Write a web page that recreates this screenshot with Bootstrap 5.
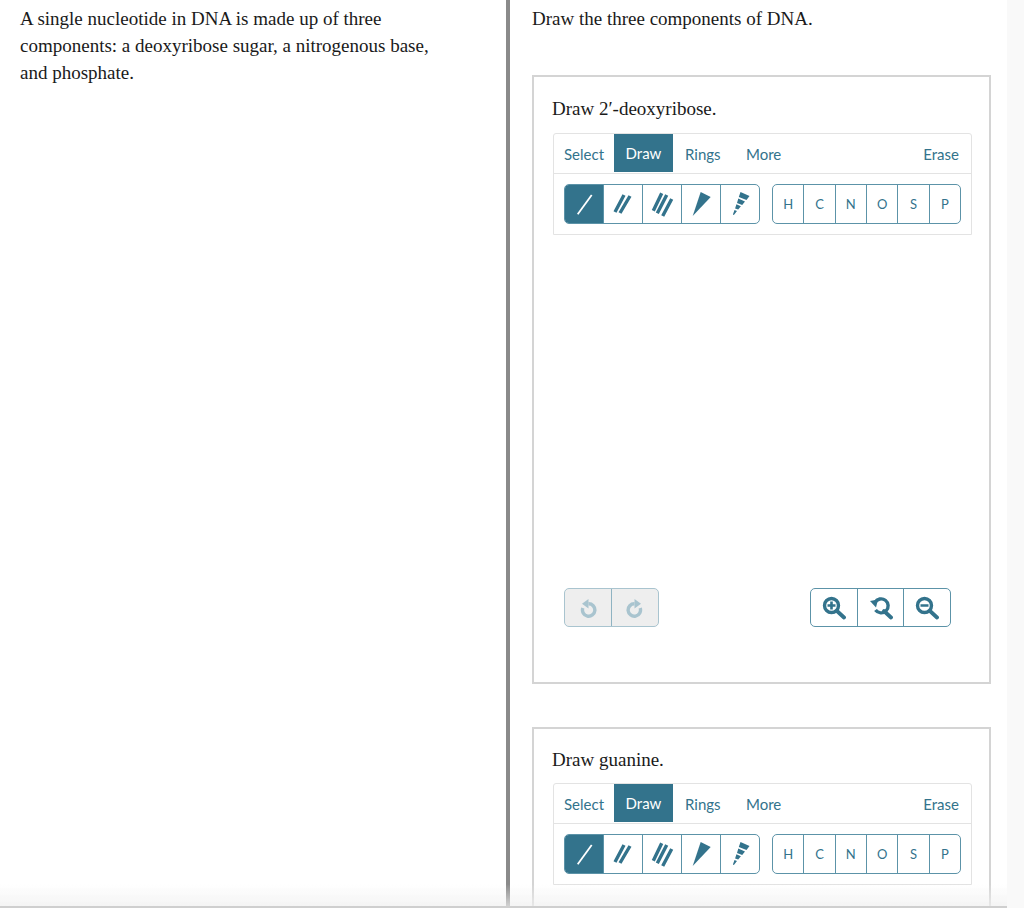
<!DOCTYPE html>
<html lang="en">
<head>
  <meta charset="UTF-8">
  <meta name="viewport" content="width=device-width, initial-scale=1">
  <title>Draw the three components of DNA</title>
  <link href="https://cdn.jsdelivr.net/npm/bootstrap@5.3.3/dist/css/bootstrap.min.css" rel="stylesheet">
  <style>
    html, body { height: 908px; overflow: hidden; }
    body {
      font-family: "Liberation Serif", serif;
      font-size: 19px;
      line-height: 27px;
      color: #1a1a1a;
      background-color: #f9f9f9;
    }
    .page-wrap { width: 1007px; height: 908px; background: #fff; overflow: hidden; }
    .left-pane { flex: 0 0 510px; padding: 5px 70px 0 20px; border-right: 4px solid #8a8a8a; }
    .right-pane { flex: 1; min-width: 0; padding: 5px 16px 0 22px; }
    .draw-box { border: 2px solid #d4d4d4; padding: 0 17px 0 19px; }
    .box-one { margin-top: 43px; height: 609px; padding-top: 18px; }
    .box-two { margin-top: 43px; padding-top: 17px; height: 180px; border-bottom: 0; }
    .draw-title { margin: 0 0 11px -1px; }
    .box-two .draw-title { margin-bottom: 10px; }
    .sketch { border: 1px solid #e3e3e3; border-radius: 3px 3px 0 0; font-family: Lato, sans-serif; font-size: 15px; color: #33738c; }
    .tab-row { height: 40px; border-bottom: 1px solid #e3e3e3; padding: 0 12px 0 9px; }
    .tab-item { line-height: 40px; }
    .tab-select { width: 41px; margin-left: 1px; }
    .tab-draw { background: #33738c; color: #fff; width: 59px; text-align: center; height: 38px; line-height: 38px; margin: 0 12px 0 9px; }
    .tab-rings { width: 37px; margin-right: 24px; }
    .tool-row { height: 60px; padding: 10px 10px 0 10px; gap: 12px; }
    .btn-strip { display: flex; height: 40px; border: 1px solid #5c93a8; border-radius: 5px; background: #fff; overflow: hidden; }
    .btn-strip > div { display: flex; align-items: center; justify-content: center; border-left: 1px solid #5c93a8; height: 100%; flex: 1; }
    .btn-strip > div:first-child { border-left: 0; }
    .strip-bonds { width: 196px; }
    .strip-atoms { width: 189px; font-size: 13px; }
    .cell-active { background: #33738c; }
    .canvas-foot { height: 392px; padding: 0 21px 0 11px; align-items: flex-end; }
    .strip-off { background: #eeeeee; border-color: #a9c4cf; width: 95px; height: 39px; }
    .strip-off > div { border-color: #8fb3c2; }
    .strip-zoom { width: 141px; height: 39px; }
    .ico-faded { color: #a9c4cf; }
    .page-fade {
      position: fixed; left: 0; right: 17px; bottom: 0; height: 24px;
      background: linear-gradient(to bottom, rgba(245,245,245,0), rgba(240,240,240,.7));
      border-bottom: 2px solid #cfcfcf;
      pointer-events: none;
    }
  </style>
</head>
<body>

<svg width="0" height="0" class="position-absolute">
  <defs>
    <symbol id="bond-double" viewBox="0 0 30 30">
      <path d="M7 23 16 6M12 24 22 7" stroke="#33738c" stroke-width="3.400" fill="none"/>
    </symbol>
    <symbol id="bond-triple" viewBox="0 0 30 30">
      <path d="M6.300 21.700 14.700 4.300M10.300 24.300 19.700 6M15.700 27 24.700 10" stroke="#33738c" stroke-width="3.400" fill="none"/>
    </symbol>
    <symbol id="bond-wedge" viewBox="0 0 30 30">
      <path d="M6.700 27 14.700 3 24.700 8Z" fill="#33738c"/>
    </symbol>
    <symbol id="bond-hash" viewBox="0 0 30 30">
      <path d="M15.500 3 24.500 7 21.500 11 13.800 8ZM13.300 9.500 20 12.500 17.200 16 12 13.900ZM11.400 15.300 15.900 17.200 13.200 20.600 10.100 19.400ZM9.500 21 12 22.100 8.900 26 7.900 25.600Z" fill="#33738c"/>
    </symbol>
    <symbol id="ico-undo" viewBox="0 0 20 20">
      <path d="M4.800 10A6.200 6.200 0 1 0 10.500 5.800" stroke="currentColor" stroke-width="3.400" fill="none"/>
      <path d="M10.500 1V10.500L4 5.700Z" fill="currentColor"/>
    </symbol>
    <symbol id="ico-redo" viewBox="0 0 20 20">
      <path d="M15.200 10A6.200 6.200 0 1 1 9.500 5.800" stroke="currentColor" stroke-width="3.400" fill="none"/>
      <path d="M9.500 1V10.500L16 5.700Z" fill="currentColor"/>
    </symbol>
    <symbol id="ico-zoom-in" viewBox="0 0 24 24">
      <circle cx="9.500" cy="9.500" r="7" stroke="#33738c" stroke-width="3.400" fill="none"/>
      <path d="M9.500 5.500v8M5.500 9.500h8" stroke="#33738c" stroke-width="2.600"/>
      <path d="M15 15 22 21.500" stroke="#33738c" stroke-width="3.800" stroke-linecap="round"/>
    </symbol>
    <symbol id="ico-zoom-reset" viewBox="0 0 24 24">
      <path d="M6 6.500A7 7 0 1 1 6.500 14" stroke="#33738c" stroke-width="3.400" fill="none"/>
      <path d="M1 5 9 3.500 7 11.500Z" fill="#33738c"/>
      <path d="M15 15 22 21.500" stroke="#33738c" stroke-width="3.800" stroke-linecap="round"/>
    </symbol>
    <symbol id="ico-zoom-out" viewBox="0 0 24 24">
      <circle cx="9.500" cy="9.500" r="7" stroke="#33738c" stroke-width="3.400" fill="none"/>
      <path d="M5.500 9.500h8" stroke="#33738c" stroke-width="2.600"/>
      <path d="M15 15 22 21.500" stroke="#33738c" stroke-width="3.800" stroke-linecap="round"/>
    </symbol>
  </defs>
</svg>

<div class="page-wrap d-flex">
  <div class="left-pane">
    <p class="mb-0">A single nucleotide in DNA is made up of three components: a deoxyribose sugar, a nitrogenous base, and phosphate.</p>
  </div>
  <div class="right-pane">
    <p class="mb-0">Draw the three components of DNA.</p>

    <div class="draw-box box-one">
      <p class="draw-title">Draw 2&#8242;-deoxyribose.</p>
      <div class="sketch">
        <div class="tab-row d-flex">
          <span class="tab-item tab-select">Select</span>
          <span class="tab-item tab-draw">Draw</span>
          <span class="tab-item tab-rings">Rings</span>
          <span class="tab-item">More</span>
          <span class="tab-item ms-auto">Erase</span>
        </div>
        <div class="tool-row d-flex">
          <div class="btn-strip strip-bonds">
            <div class="cell-active"><svg width="30" height="30" viewBox="0 0 30 30"><path d="M8.700 25.300 22.700 6" stroke="#fff" stroke-width="1.800"/></svg></div>
            <div><svg width="30" height="30"><use href="#bond-double"/></svg></div>
            <div><svg width="30" height="30"><use href="#bond-triple"/></svg></div>
            <div><svg width="30" height="30"><use href="#bond-wedge"/></svg></div>
            <div><svg width="30" height="30"><use href="#bond-hash"/></svg></div>
          </div>
          <div class="btn-strip strip-atoms">
            <div>H</div><div>C</div><div>N</div><div>O</div><div>S</div><div>P</div>
          </div>
        </div>
      </div>
      <div class="canvas-foot d-flex justify-content-between">
        <div class="btn-strip strip-off">
          <div><svg class="ico-faded" width="20" height="20"><use href="#ico-undo"/></svg></div>
          <div><svg class="ico-faded" width="20" height="20"><use href="#ico-redo"/></svg></div>
        </div>
        <div class="btn-strip strip-zoom">
          <div><svg width="24" height="24"><use href="#ico-zoom-in"/></svg></div>
          <div><svg width="24" height="24"><use href="#ico-zoom-reset"/></svg></div>
          <div><svg width="24" height="24"><use href="#ico-zoom-out"/></svg></div>
        </div>
      </div>
    </div>

    <div class="draw-box box-two">
      <p class="draw-title">Draw guanine.</p>
      <div class="sketch">
        <div class="tab-row d-flex">
          <span class="tab-item tab-select">Select</span>
          <span class="tab-item tab-draw">Draw</span>
          <span class="tab-item tab-rings">Rings</span>
          <span class="tab-item">More</span>
          <span class="tab-item ms-auto">Erase</span>
        </div>
        <div class="tool-row d-flex">
          <div class="btn-strip strip-bonds">
            <div class="cell-active"><svg width="30" height="30" viewBox="0 0 30 30"><path d="M8.700 25.300 22.700 6" stroke="#fff" stroke-width="1.800"/></svg></div>
            <div><svg width="30" height="30"><use href="#bond-double"/></svg></div>
            <div><svg width="30" height="30"><use href="#bond-triple"/></svg></div>
            <div><svg width="30" height="30"><use href="#bond-wedge"/></svg></div>
            <div><svg width="30" height="30"><use href="#bond-hash"/></svg></div>
          </div>
          <div class="btn-strip strip-atoms">
            <div>H</div><div>C</div><div>N</div><div>O</div><div>S</div><div>P</div>
          </div>
        </div>
      </div>
    </div>
  </div>
</div>

<div class="page-fade"></div>

<script src="https://cdn.jsdelivr.net/npm/bootstrap@5.3.3/dist/js/bootstrap.bundle.min.js"></script>
</body>
</html>
